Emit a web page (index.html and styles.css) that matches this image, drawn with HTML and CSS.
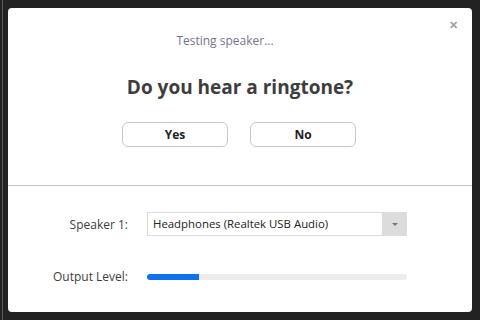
FILE: index.html
```html
<!DOCTYPE html>
<html>
    <head>
        <title>Speaker Test</title>
        <meta charset="UTF-8">
        <link rel="stylesheet" href="styles.css">
    </head>
    <body>
        <div class="dialog">
            <span class="close">&#x2715;</span>
            <div class="status">Testing speaker...</div>
            <div class="question">Do you hear a ringtone?</div>
            <div class="answers">
                <button class="btn">Yes</button>
                <button class="btn">No</button>
            </div>
            <div class="divider"></div>
            <div class="settings">
                <div class="row">
                    <span class="label">Speaker 1:</span>
                    <div class="select">
                        <span class="select-text">Headphones (Realtek USB Audio)</span>
                        <span class="select-arrow"><span class="caret"></span></span>
                    </div>
                </div>
                <div class="row row-level">
                    <span class="label">Output Level:</span>
                    <div class="level">
                        <div class="level-fill" style="width: 20%"></div>
                    </div>
                </div>
            </div>
        </div>
    </body>
</html>
```

FILE: styles.css
```css
html, body {
    margin: 0;
    height: 100%;
}
body {
    background: linear-gradient(to right, #222 2px, #5a5a5a 2px, #5a5a5a 3px, #222 3px);
    font-family: "Open Sans", "Noto Sans", sans-serif;
    padding: 8px;
    box-sizing: border-box;
}
.dialog {
    position: relative;
    width: 464px;
    height: 304px;
    background: #fff;
    border-radius: 4px;
}
.close {
    position: absolute;
    top: 9px;
    right: 14px;
    font-size: 11px;
    font-weight: bold;
    color: #a0a0a0;
}
.status {
    padding-top: 25px;
    padding-right: 30px;
    text-align: center;
    font-size: 12px;
    line-height: 16px;
    color: #747487;
}
.question {
    margin-top: 25px;
    text-align: center;
    font-size: 19px;
    font-weight: bold;
    line-height: 26px;
    color: #3d3d3d;
}
.answers {
    display: flex;
    justify-content: center;
    gap: 22px;
    margin-top: 22px;
    padding-right: 2px;
}
.btn {
    width: 106px;
    height: 25px;
    background: #fff;
    border: 1px solid #c8c8d2;
    border-radius: 6px;
    font-family: inherit;
    font-size: 12px;
    font-weight: bold;
    color: #222;
}
.divider {
    margin-top: 38px;
    border-top: 1px solid #c4c4c4;
}
.settings {
    padding-top: 26px;
}
.row {
    display: flex;
    align-items: center;
}
.row-level {
    margin-top: 32px;
}
.label {
    width: 120px;
    text-align: right;
    font-size: 12px;
    color: #3d3d3d;
    margin-right: 19px;
}
.select {
    display: flex;
    width: 260px;
    height: 24px;
    box-sizing: border-box;
    border: 1px solid #dcdcdc;
    border-right: none;
}
.select-text {
    flex: 1;
    padding-left: 5px;
    font-size: 11.4px;
    line-height: 22px;
    color: #222;
}
.select-arrow {
    width: 25px;
    background: #dcdcdc;
    display: flex;
    align-items: center;
    justify-content: center;
}
.caret {
    border-left: 3px solid transparent;
    border-right: 3px solid transparent;
    border-top: 3px solid #777;
}
.level {
    width: 260px;
    height: 6px;
    background: #ececec;
    border-radius: 3px;
    overflow: hidden;
}
.level-fill {
    height: 100%;
    background: #0e72ed;
}
```
